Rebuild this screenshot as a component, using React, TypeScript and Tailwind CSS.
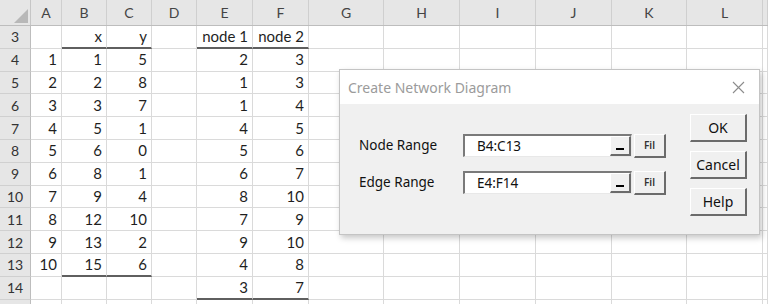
import React from 'react';

const colWidths = ['w-[31px]', 'w-[45px]', 'w-[45px]', 'w-[45px]', 'w-[56px]', 'w-[56px]', 'w-[75px]', 'w-[76px]', 'w-[76px]', 'w-[76px]', 'w-[75px]', 'w-[76px]', 'flex-1'];
const letters = ['A', 'B', 'C', 'D', 'E', 'F', 'G', 'H', 'I', 'J', 'K', 'L', ''];

const data: string[][] = [
  ['', 'x', 'y', '', 'node 1', 'node 2'],
  ['1', '1', '5', '', '2', '3'],
  ['2', '2', '8', '', '1', '3'],
  ['3', '3', '7', '', '1', '4'],
  ['4', '5', '1', '', '4', '5'],
  ['5', '6', '0', '', '5', '6'],
  ['6', '8', '1', '', '6', '7'],
  ['7', '9', '4', '', '8', '10'],
  ['8', '12', '10', '', '7', '9'],
  ['9', '13', '2', '', '9', '10'],
  ['10', '15', '6', '', '4', '8'],
  ['', '', '', '', '3', '7'],
  ['', '', '', '', '', ''],
];

// cells that carry the dark underline (row index into data, col index)
function underlined(r: number, c: number) {
  if (r === 0 && (c === 1 || c === 2 || c === 4 || c === 5)) return true;
  if (r === 10 && (c === 1 || c === 2)) return true;
  if (r === 11 && (c === 4 || c === 5)) return true;
  return false;
}

function Sheet() {
  return (
    <div className="flex flex-col text-[15px] text-[#1f1f1f]" style={{ fontFamily: 'Lato, "Noto Sans", sans-serif' }}>
      {/* column headers */}
      <div className="flex h-[26px] bg-[#e6e6e6] border-b border-[#bdbdbd]">
        <div className="w-[31px] shrink-0 border-r border-[#c6c6c6] relative">
          <svg className="absolute right-[2px] bottom-[2px]" width="14" height="14" viewBox="0 0 14 14">
            <polygon points="14,0 14,14 0,14" fill="#b8b8b8" />
          </svg>
        </div>
        {letters.map((l, i) => (
          <div key={i} className={`${colWidths[i]} shrink-0 border-r border-[#cfcfcf] flex items-center justify-center text-[14px] text-[#444]`}>
            {l}
          </div>
        ))}
      </div>
      {data.map((row, r) => (
        <div key={r} className="flex h-[22.8px]">
          {/* last row is only a sliver at the bottom edge, so no number */}
          <div className="w-[31px] shrink-0 bg-[#e6e6e6] border-r border-[#bdbdbd] border-b border-b-[#d0d0d0] flex items-center justify-center text-[14px] text-[#333]">
            {r < data.length - 1 ? r + 3 : ''}
          </div>
          {colWidths.map((w, c) => (
            <div
              key={c}
              className={`${w} shrink-0 border-r border-[#dadada] flex items-center justify-end pr-[4px] leading-none ${
                underlined(r, c) ? 'border-b-2 border-b-[#5f5f5f]' : 'border-b border-b-[#dadada]'
              }`}
            >
              {row[c] ?? ''}
            </div>
          ))}
        </div>
      ))}
    </div>
  );
}

function RaisedButton({ className, children }: { className: string; children?: React.ReactNode }) {
  return (
    <div
      className={`${className} bg-[#f0f0f0] border-t border-l border-t-white border-l-white border-b-2 border-r-2 border-b-[#6b6b6b] border-r-[#6b6b6b] flex items-center justify-center`}
    >
      {children}
    </div>
  );
}

function RangeRow({ label, value }: { label: string; value: string }) {
  return (
    <div className="flex items-center h-[23px]">
      <div className="w-[104px] text-[13.5px] text-[#111]">{label}</div>
      <div className="w-[169px] h-[23px] flex bg-white border-t-2 border-l-2 border-t-[#7a7a7a] border-l-[#7a7a7a] border-b border-r border-b-[#e8e8e8] border-r-[#e8e8e8]">
        <div className="flex-1 pl-[12px] flex items-center text-[13.5px] text-[#111]">{value}</div>
        <RaisedButton className="w-[21px] h-full items-end pb-[4px]">
          <div className="w-[8px] h-[2px] bg-black" />
        </RaisedButton>
      </div>
      <RaisedButton className="ml-[2px] w-[32px] h-[24px] text-[10px] font-semibold text-[#333]">Fil</RaisedButton>
    </div>
  );
}

function Dialog() {
  return (
    <div
      className="absolute left-[339px] top-[69px] w-[421px] h-[166px] bg-[#f0f0f0] border border-[#c4c4c4] shadow-[2px_3px_6px_rgba(0,0,0,0.22)] flex flex-col"
      style={{ fontFamily: '"Noto Sans", "Open Sans", sans-serif' }}
    >
      <div className="h-[34px] bg-white flex items-center justify-between pl-[8px] pr-[14px]">
        <span className="text-[14px] text-[#9b9b9b]">Create Network Diagram</span>
        <svg width="13" height="13" viewBox="0 0 13 13">
          <path d="M1 1 L12 12 M12 1 L1 12" stroke="#8c8c8c" strokeWidth="1.1" fill="none" />
        </svg>
      </div>
      <div className="flex flex-1 pl-[19px] pt-[10px]">
        <div className="flex flex-col gap-[14px] mt-[20px]">
          <RangeRow label="Node Range" value="B4:C13" />
          <RangeRow label="Edge Range" value="E4:F14" />
        </div>
        <div className="ml-[24px] flex flex-col gap-[9px]">
          <RaisedButton className="w-[57px] h-[28px] text-[14px] text-[#111]">OK</RaisedButton>
          <RaisedButton className="w-[57px] h-[28px] text-[14px] text-[#111]">Cancel</RaisedButton>
          <RaisedButton className="w-[57px] h-[28px] text-[14px] text-[#111]">Help</RaisedButton>
        </div>
      </div>
    </div>
  );
}

export default function App() {
  return (
    <div className="relative w-[768px] h-[304px] overflow-hidden bg-white">
      <Sheet />
      <Dialog />
    </div>
  );
}
